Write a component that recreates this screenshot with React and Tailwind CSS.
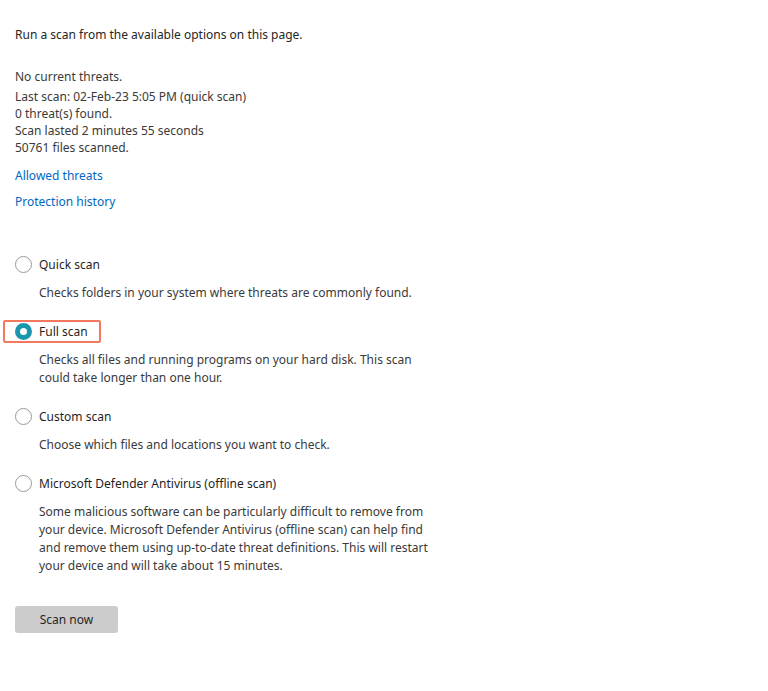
import { useState } from 'react';

const scanOptions = [
    { id: 'quick', label: 'Quick scan', desc: ['Checks folders in your system where threats are commonly found.'] },
    { id: 'full', label: 'Full scan', desc: ['Checks all files and running programs on your hard disk. This scan', 'could take longer than one hour.'] },
    { id: 'custom', label: 'Custom scan', desc: ['Choose which files and locations you want to check.'] },
    {
        id: 'offline',
        label: 'Microsoft Defender Antivirus (offline scan)',
        desc: [
            'Some malicious software can be particularly difficult to remove from',
            'your device. Microsoft Defender Antivirus (offline scan) can help find',
            'and remove them using up-to-date threat definitions. This will restart',
            'your device and will take about 15 minutes.',
        ],
    },
];

const Radio = ({ checked }) => (
    checked ? (
        <span className="h-[17px] w-[17px] rounded-full bg-[#1a97ad] flex items-center justify-center shrink-0">
            <span className="h-[7px] w-[7px] rounded-full bg-white" />
        </span>
    ) : (
        <span className="h-[17px] w-[17px] rounded-full border border-[#9a9a9a] bg-white shrink-0" />
    )
);

const App = () => {
    const [selected, setSelected] = useState('full');

    return (
        <div className="min-h-[691px] bg-white text-[#262626] text-[12px] leading-[17px] pt-[26px]" style={{ fontFamily: '"Noto Sans", "Open Sans", sans-serif' }}>
            <p className="pl-[15px]">Run a scan from the available options on this page.</p>

            <div className="pl-[15px] mt-[25px] text-[#3a3a3a]">
                <p>No current threats.</p>
                <div className="mt-[3px]">
                    <p>Last scan: 02-Feb-23 5:05 PM (quick scan)</p>
                    <p>0 threat(s) found.</p>
                    <p>Scan lasted 2 minutes 55 seconds</p>
                    <p>50761 files scanned.</p>
                </div>
            </div>

            <div className="pl-[15px] mt-[11px] flex flex-col gap-[9px] text-[#0067c0]">
                <a href="#allowed">Allowed threats</a>
                <a href="#history">Protection history</a>
            </div>

            <div className="mt-[43px] flex flex-col">
                {scanOptions.map((opt, i) => (
                    <div key={opt.id} className={i === 0 ? '' : 'mt-[18px]'}>
                        <label
                            className={`ml-[3px] pl-[10px] w-fit pr-[11px] h-[23px] flex items-center gap-[7px] cursor-pointer border-2 rounded-[2px] ${selected === opt.id && opt.id === 'full' ? 'border-[#f2795d]' : 'border-transparent'}`}
                            onClick={() => setSelected(opt.id)}
                        >
                            <Radio checked={selected === opt.id} />
                            <span className="text-[#1f1f1f]">{opt.label}</span>
                        </label>
                        <div className="pl-[39px] mt-[8px] text-[#3a3a3a] leading-[18px]">
                            {opt.desc.map((line) => (
                                <p key={line}>{line}</p>
                            ))}
                        </div>
                    </div>
                ))}
            </div>

            <button className="ml-[15px] mt-[31px] w-[103px] h-[27px] bg-[#cccccc] rounded-[3px] text-[#262626]">
                Scan now
            </button>
        </div>
    );
};

export default App;
